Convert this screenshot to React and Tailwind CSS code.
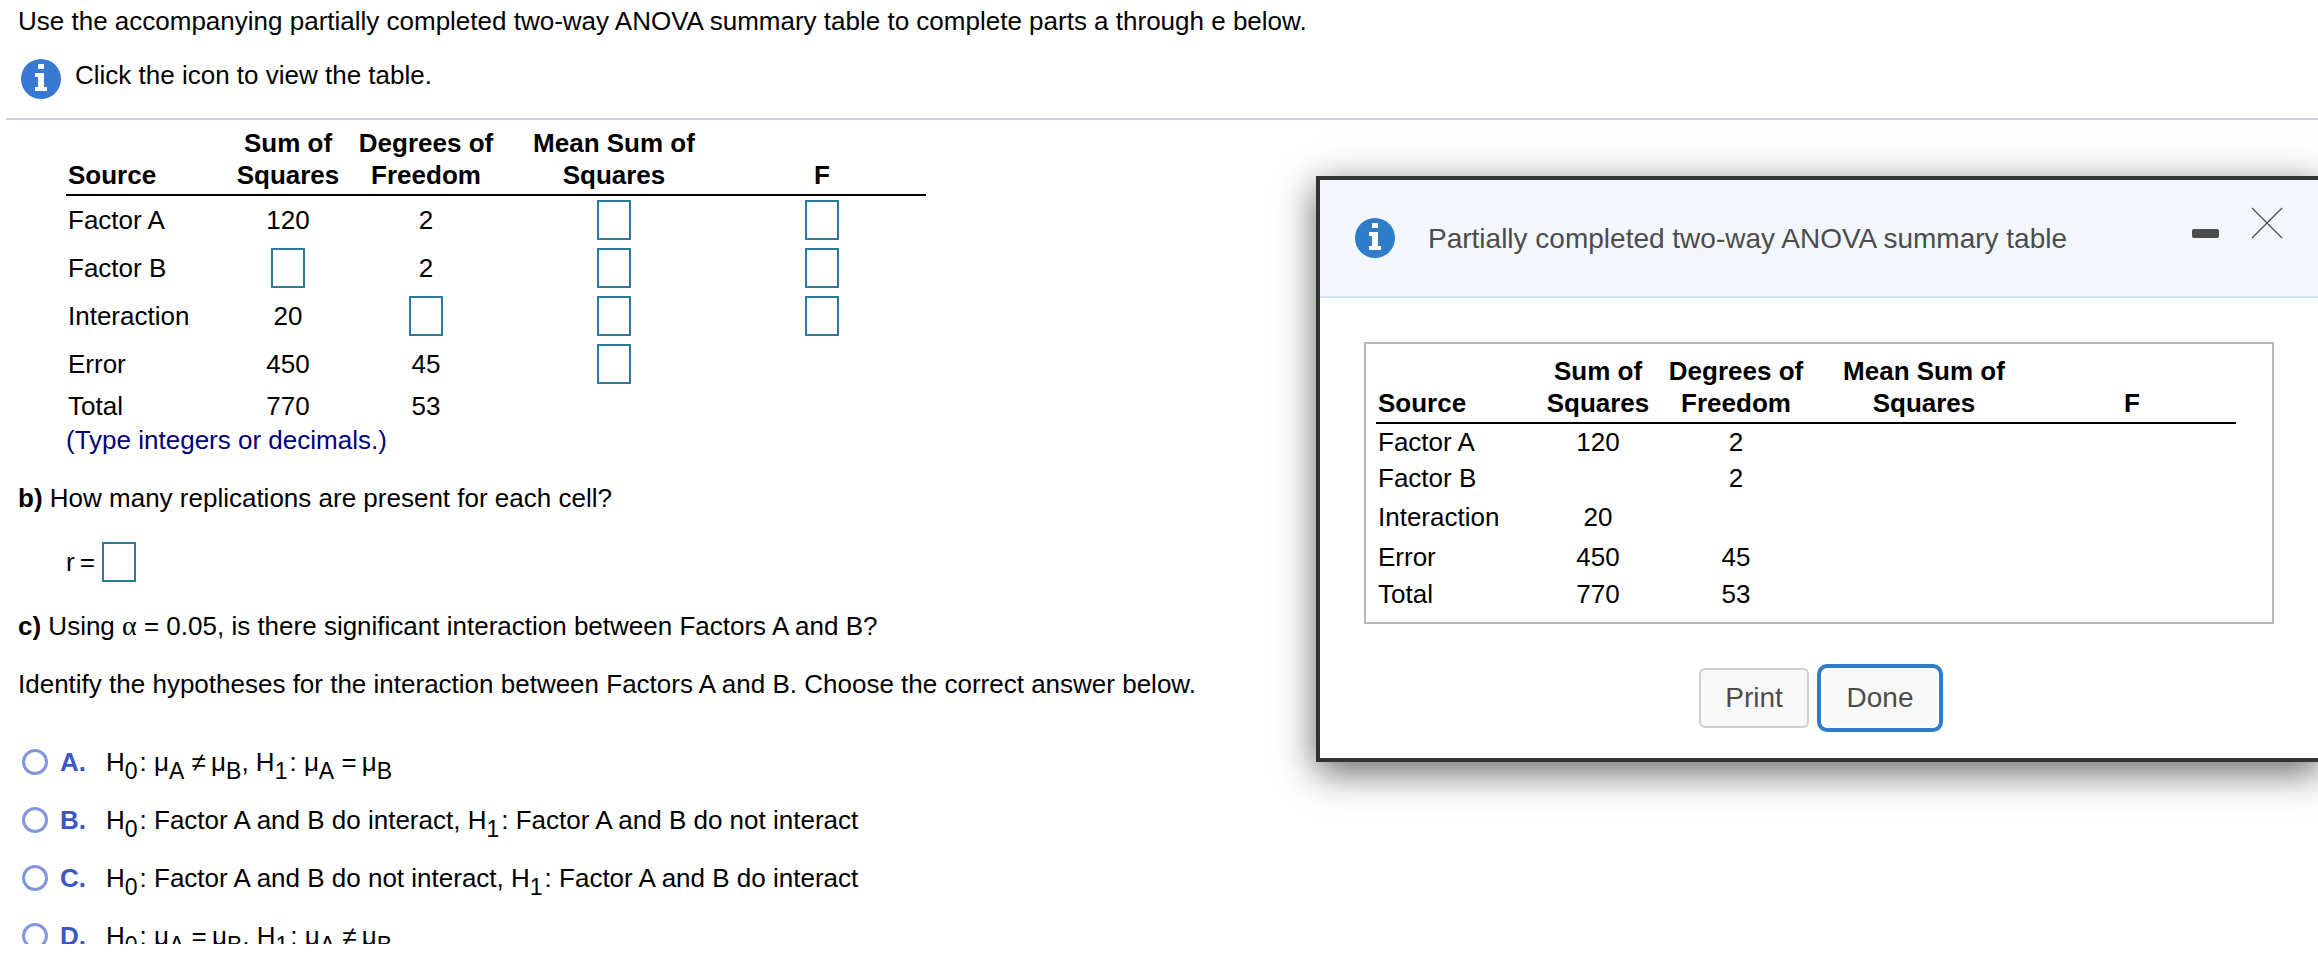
import { useState } from 'react'

const ROWS = [
  { source: 'Factor A', cells: ['120', '2', null, null] },
  { source: 'Factor B', cells: [null, '2', null, null] },
  { source: 'Interaction', cells: ['20', null, null, null] },
  { source: 'Error', cells: ['450', '45', null, ''] },
  { source: 'Total', cells: ['770', '53', '', ''] },
]

const COLUMNS = ['Sum of Squares', 'Degrees of Freedom', 'Mean Sum of Squares', 'F']

function InfoIcon({ className, fill }) {
  return (
    <svg className={className} viewBox="0 0 40 40" aria-hidden="true">
      <circle cx="20" cy="20" r="20" fill={fill} />
      <path d="M17 5h6v5h-6zM14 14h9v14h3v4H14v-4h3V18h-3z" fill="#fff" />
    </svg>
  )
}

function AnswerBox(props) {
  return (
    <input
      type="text"
      className="block w-[34px] h-10 border-2 border-[#2f7a99] bg-white text-center outline-none"
      {...props}
    />
  )
}

function AnovaTable({ editable, rowHeights }) {
  return (
    <table className="w-[860px] table-fixed border-separate border-spacing-0">
      <colgroup>
        <col className="w-[161px]" />
        <col className="w-[122px]" />
        <col className="w-[154px]" />
        <col className="w-[222px]" />
        <col className="w-[194px]" />
        <col />
      </colgroup>
      <thead>
        <tr className="align-bottom font-bold">
          <th className="border-b-2 border-black pt-[7px] pb-[3px] pl-0.5 text-left">Source</th>
          <th className="border-b-2 border-black pt-[7px] pb-[3px] px-2">{COLUMNS[0]}</th>
          <th className="border-b-2 border-black pt-[7px] pb-[3px] px-2">{COLUMNS[1]}</th>
          <th className="border-b-2 border-black pt-[7px] pb-[3px] px-7">{COLUMNS[2]}</th>
          <th className="border-b-2 border-black pt-[7px] pb-[3px]">{COLUMNS[3]}</th>
          <th className="border-b-2 border-black" />
        </tr>
      </thead>
      <tbody>
        {ROWS.map((row, r) => (
          <tr key={row.source} className={rowHeights[r]}>
            <td className="pl-0.5">{row.source}</td>
            {row.cells.map((cell, i) => (
              <td key={COLUMNS[i]} className="text-center">
                {cell === null && editable ? (
                  <div className="flex justify-center">
                    <AnswerBox aria-label={`${row.source}, ${COLUMNS[i]}`} />
                  </div>
                ) : cell}
              </td>
            ))}
            <td />
          </tr>
        ))}
      </tbody>
    </table>
  )
}

function H({ n }) {
  return <>H<sub className="static mr-0.5 align-[-8px] text-[23px] leading-[0]">{n}</sub></>
}

function Mu({ of }) {
  return <>μ<sub className="static align-[-8px] text-[23px] leading-[0]">{of}</sub></>
}

function Option({ letter, selected, onSelect, children }) {
  return (
    <label className="flex h-8 items-center whitespace-nowrap">
      <input
        type="radio"
        name="hypotheses"
        checked={selected}
        onChange={onSelect}
        className="w-[26px] h-[26px] shrink-0 appearance-none rounded-full border-3 border-[#8395dc] bg-white checked:bg-[#8395dc]"
      />
      <span className="ml-3 w-[46px] font-bold text-[#3a57c4]">{letter}.</span>
      <span>{children}</span>
    </label>
  )
}

function TableDialog({ onClose }) {
  return (
    <div
      role="dialog"
      aria-labelledby="dialog-title"
      className="absolute top-[176px] -right-1 w-[1006px] border-4 border-[#333] bg-white shadow-[0_10px_36px_rgba(0,0,0,0.6)]"
    >
      <div className="flex h-[118px] border-b-2 border-[#cfe5f7] bg-[#f3f6fb] px-[35px] text-[#4c4c4c]">
        <InfoIcon className="mt-[38px] h-10 w-10 shrink-0" fill="#2f7cc9" />
        <h2 id="dialog-title" className="mt-[41px] ml-[33px] flex-1 text-[28px] leading-9">
          Partially completed two-way ANOVA summary table
        </h2>
        <button type="button" aria-label="Minimize" className="mt-[49px] h-[9px] w-[27px] rounded-xs bg-[#4c4c4c]" />
        <button type="button" aria-label="Close" onClick={onClose} className="mt-[27px] ml-8 h-8 w-8">
          <svg viewBox="0 0 32 32" className="h-8 w-8" stroke="#4c4c4c" strokeWidth="1.2">
            <path d="M1 1L31 31M31 1L1 31" />
          </svg>
        </button>
      </div>
      <div className="px-11 pt-11 pb-[26px]">
        <div className="border-2 border-[#b8b8b8] px-2.5 pt-1 pb-2.5">
          <AnovaTable rowHeights={['h-9', 'h-9', 'h-[42px]', 'h-[38px]', 'h-9']} />
        </div>
        <div className="mt-10 flex items-center justify-center gap-2 pl-1 text-[28px] text-[#4c4c4c]">
          <button type="button" className="h-[60px] w-[110px] rounded-md border-2 border-[#cecece] bg-[#f8f8f8]">
            Print
          </button>
          <button
            type="button"
            onClick={onClose}
            className="h-[68px] w-[126px] rounded-[10px] border-4 border-[#2f7cc9] bg-[#f8f8f8] inset-ring-2 inset-ring-white"
          >
            Done
          </button>
        </div>
      </div>
    </div>
  )
}

export default function App() {
  const [open, setOpen] = useState(true)
  const [answer, setAnswer] = useState(null)

  return (
    <div className="relative h-screen overflow-hidden bg-white font-['Liberation_Sans',Arial,sans-serif] text-[26px] leading-8 text-black">
      <main className="h-[calc(100vh-36px)] overflow-hidden">
        <p className="pt-[5px] pl-[18px]">
          Use the accompanying partially completed two-way ANOVA summary table to complete parts a through e below.
        </p>

        <button type="button" onClick={() => setOpen(true)} className="mt-[22px] ml-[21px] flex items-start gap-[14px]">
          <InfoIcon className="h-10 w-10" fill="#3879d3" />
          <span>Click the icon to view the table.</span>
        </button>

        <hr className="mt-[19px] ml-1.5 border-t-2 border-[#c9cfdd]" />

        {/* Part a */}
        <section className="pl-[66px]">
          <AnovaTable editable rowHeights={['h-12', 'h-12', 'h-12', 'h-12', 'h-9']} />
          <p className="text-[#000080]">(Type integers or decimals.)</p>
        </section>

        {/* Part b */}
        <section className="mt-[26px] pl-[18px]">
          <p><b>b)</b> How many replications are present for each cell?</p>
          <div className="mt-7 flex items-center gap-[7px] pl-12">
            <label htmlFor="replications">r&thinsp;=</label>
            <AnswerBox id="replications" />
          </div>
        </section>

        {/* Part c */}
        <section className="mt-7 pl-[18px]">
          <p>
            <b>c)</b> Using <span className="font-['Liberation_Serif',serif] text-[28px] leading-none">α</span> = 0.05,
            is there significant interaction between Factors A and B?
          </p>
          <p className="mt-[26px]">
            Identify the hypotheses for the interaction between Factors A and B. Choose the correct answer below.
          </p>
          <div className="mt-[46px] flex flex-col gap-[26px] pl-1">
            <Option letter="A" selected={answer === 'A'} onSelect={() => setAnswer('A')}>
              <H n="0" />: <Mu of="A" /> ≠&thinsp;<Mu of="B" />, <H n="1" />: <Mu of="A" /> =&thinsp;<Mu of="B" />
            </Option>
            <Option letter="B" selected={answer === 'B'} onSelect={() => setAnswer('B')}>
              <H n="0" />: Factor A and B do interact, <H n="1" />: Factor A and B do not interact
            </Option>
            <Option letter="C" selected={answer === 'C'} onSelect={() => setAnswer('C')}>
              <H n="0" />: Factor A and B do not interact, <H n="1" />: Factor A and B do interact
            </Option>
            <Option letter="D" selected={answer === 'D'} onSelect={() => setAnswer('D')}>
              <H n="0" />: <Mu of="A" /> =&thinsp;<Mu of="B" />, <H n="1" />: <Mu of="A" /> ≠&thinsp;<Mu of="B" />
            </Option>
          </div>
        </section>
      </main>

      {open && <TableDialog onClose={() => setOpen(false)} />}
    </div>
  )
}
